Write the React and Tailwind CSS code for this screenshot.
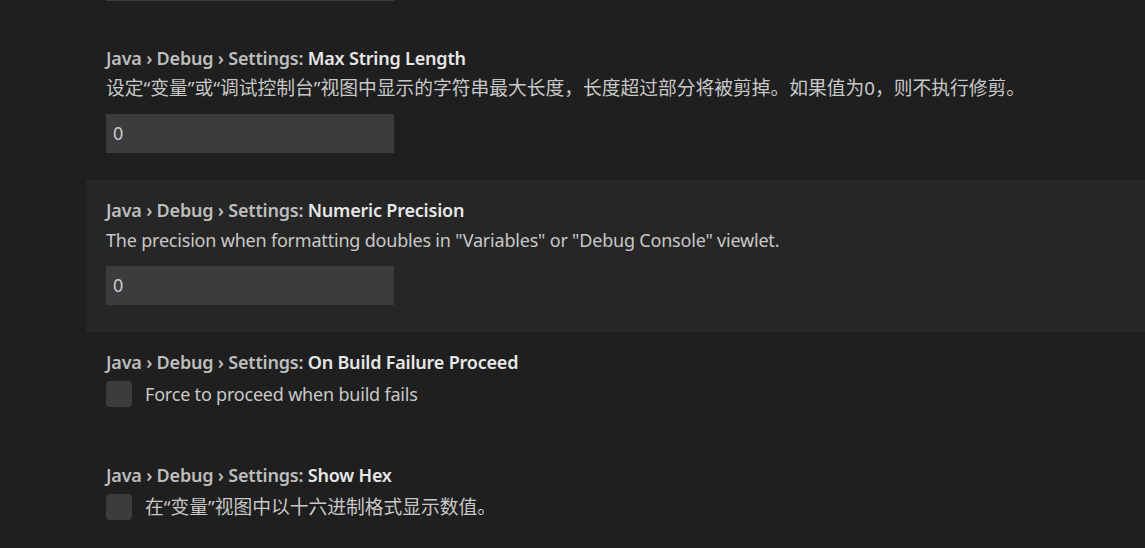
const FONT = "font-['Segoe_UI','Noto_Sans','Noto_Sans_CJK_SC',sans-serif]";

const SETTINGS = [
  {
    name: "Max String Length",
    kind: "number",
    desc: "设定“变量”或“调试控制台”视图中显示的字符串最大长度，长度超过部分将被剪掉。如果值为0，则不执行修剪。",
    cjk: true,
    value: "0",
  },
  {
    name: "Numeric Precision",
    kind: "number",
    desc: 'The precision when formatting doubles in "Variables" or "Debug Console" viewlet.',
    value: "0",
    hover: true,
  },
  {
    name: "On Build Failure Proceed",
    kind: "bool",
    desc: "Force to proceed when build fails",
  },
  {
    name: "Show Hex",
    kind: "bool",
    desc: "在“变量”视图中以十六进制格式显示数值。",
    cjk: true,
  },
];

function Title({ name }) {
  return (
    <div className="h-6 leading-6 text-[18px] tracking-[-0.2px] font-semibold whitespace-nowrap">
      <span className="text-[#bdbdbd]">Java › Debug › Settings: </span>
      <span className="text-[#e7e7e7]">{name}</span>
    </div>
  );
}

function descCls(cjk) {
  return cjk
    ? "h-6 leading-6 text-[18.75px] text-[#c8c8c8] whitespace-nowrap"
    : "h-6 leading-6 text-[18px] tracking-[-0.2px] text-[#c8c8c8] whitespace-nowrap";
}

function NumberItem({ s }) {
  return (
    <div className={`pl-5 pt-[18px] pb-[27px] ${s.hover ? "bg-[#262626]" : ""}`}>
      <Title name={s.name} />
      <div className={`mt-[6px] ${descCls(s.cjk)}`}>{s.desc}</div>
      <div className="mt-[14px] w-[288px] h-[39px] bg-[#3c3c3c] px-[7px] flex items-center text-[18px] text-[#cccccc]">
        {s.value}
      </div>
    </div>
  );
}

function BoolItem({ s, last }) {
  return (
    <div className={`pl-5 pt-[18px] ${last ? "pb-[28px]" : "pb-[38px]"}`}>
      <Title name={s.name} />
      <div className="mt-[7px] flex items-center gap-[13px]">
        <div className="w-[26px] h-[26px] rounded-[4px] bg-[#3c3c3c] shrink-0" />
        <span className={descCls(s.cjk)}>{s.desc}</span>
      </div>
    </div>
  );
}

export default function App() {
  return (
    <div className={`w-[1145px] h-[548px] overflow-hidden bg-[#1f1f1f] ${FONT}`}>
      <div className="ml-[86px]">
        <div className="pl-5 pb-[27px]">
          <div className="w-[288px] h-px bg-[#3c3c3c]" />
        </div>
        {SETTINGS.map((s, i) =>
          s.kind === "number" ? (
            <NumberItem key={s.name} s={s} />
          ) : (
            <BoolItem key={s.name} s={s} last={i === SETTINGS.length - 1} />
          )
        )}
      </div>
    </div>
  );
}
